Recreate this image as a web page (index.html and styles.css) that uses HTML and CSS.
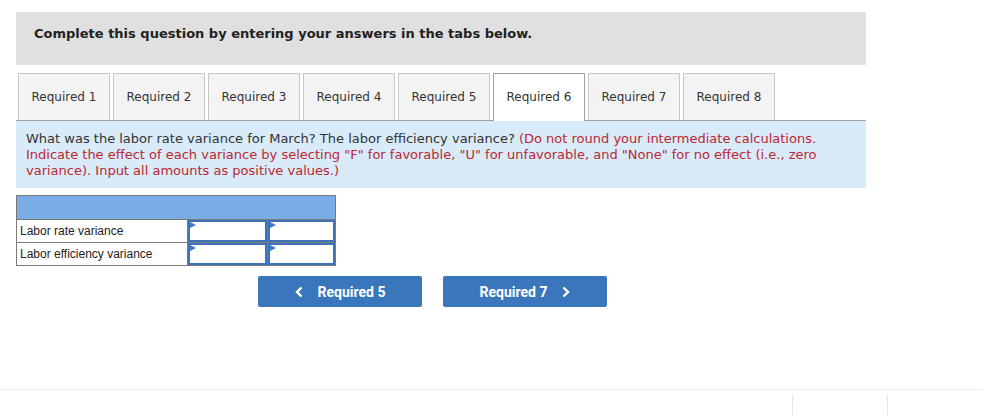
FILE: index.html
```html
<!DOCTYPE html>
<html lang="en">
<head>
    <meta charset="UTF-8">
    <title>Required 6</title>
    <link rel="stylesheet" href="styles.css">
</head>
<body>
    <div class="container">
        <div class="instructions">Complete this question by entering your answers in the tabs below.</div>

        <div class="tabs">
            <div class="tab">Required 1</div>
            <div class="tab">Required 2</div>
            <div class="tab">Required 3</div>
            <div class="tab">Required 4</div>
            <div class="tab">Required 5</div>
            <div class="tab active">Required 6</div>
            <div class="tab">Required 7</div>
            <div class="tab">Required 8</div>
        </div>

        <div class="question">What was the labor rate variance for March? The labor efficiency variance? <span class="note">(Do not round your intermediate calculations. Indicate the effect of each variance by selecting "F" for favorable, "U" for unfavorable, and "None" for no effect (i.e., zero variance). Input all amounts as positive values.)</span></div>

        <table class="answers">
            <tr class="head">
                <td colspan="3"></td>
            </tr>
            <tr>
                <td class="label">Labor rate variance</td>
                <td class="entry col2"><div class="box"></div></td>
                <td class="entry col3"><div class="box"></div></td>
            </tr>
            <tr>
                <td class="label">Labor efficiency variance</td>
                <td class="entry col2"><div class="box"></div></td>
                <td class="entry col3"><div class="box"></div></td>
            </tr>
        </table>

        <div class="nav">
            <button class="nav-btn">
                <svg class="chev left" width="8" height="12" viewBox="0 0 8 12"><path d="M6.5 1.5 L2 6 L6.5 10.5" fill="none" stroke="#fff" stroke-width="2.4"/></svg>
                Required 5
            </button>
            <button class="nav-btn">
                Required 7
                <svg class="chev right" width="8" height="12" viewBox="0 0 8 12"><path d="M1.5 1.5 L6 6 L1.5 10.5" fill="none" stroke="#fff" stroke-width="2.4"/></svg>
            </button>
        </div>
    </div>

    <footer class="footer">
        <div class="cell wide"></div>
        <div class="cell"></div>
        <div class="cell"></div>
    </footer>
</body>
</html>
```

FILE: styles.css
```css
body {
    margin: 0;
    font-family: "DejaVu Sans", Verdana, sans-serif;
    color: #333;
    background: #fff;
}

.container {
    width: 850px;
    padding: 12px 0 0 16px;
}

.instructions {
    background-color: #e0e0e0;
    height: 53px;
    box-sizing: border-box;
    padding: 14px 18px 0;
    font-size: 13px;
    line-height: 16px;
    font-weight: bold;
    color: #222;
}

.tabs {
    display: flex;
    gap: 3px;
    margin-top: 8px;
    padding-left: 2px;
    border-bottom: 1px solid #a0a0a0;
    height: 47px;
}

.tab {
    width: 92px;
    box-sizing: border-box;
    height: 47px;
    border: 1px solid #c8c8c8;
    border-bottom: none;
    background-color: #f3f3f3;
    font-size: 12px;
    line-height: 47px;
    text-align: center;
    color: #333;
}

.tab.active {
    background-color: #fff;
    border-color: #a0a0a0;
    height: 48px;
    position: relative;
    z-index: 1;
}

.question {
    background-color: #d9ebf9;
    padding: 10px 10px 9px;
    font-size: 13px;
    line-height: 16px;
    color: #333;
}

.note {
    color: #bb2731;
}

.answers {
    margin-top: 7px;
    border-collapse: collapse;
    font-family: "Liberation Sans", Arial, sans-serif;
    font-size: 12px;
    color: #222;
}

.answers td {
    border: 1px solid #7a7a7a;
    padding: 0;
}

.answers .head td {
    background-color: #7aade5;
    height: 23px;
}

.label {
    width: 167px;
    padding: 0 0 0 3px !important;
}

.col2 {
    width: 79px;
}

.col3 {
    width: 67px;
}

.box {
    position: relative;
    height: 22px;
    box-sizing: border-box;
    border: 2px solid #3c72b6;
    background: #fff;
}

.box::before {
    content: "";
    position: absolute;
    left: 0;
    top: 0;
    border-left: 6px solid #3c7ccb;
    border-top: 3px solid transparent;
    border-bottom: 3px solid transparent;
}

.nav {
    display: flex;
    gap: 21px;
    padding-left: 242px;
    margin-top: 10px;
}

.nav-btn {
    width: 164px;
    height: 31px;
    border: none;
    border-radius: 2px;
    background-color: #3a76bb;
    color: #fff;
    font-family: Roboto, "Liberation Sans", sans-serif;
    font-weight: bold;
    font-size: 14px;
    cursor: pointer;
    display: flex;
    align-items: center;
    justify-content: center;
    padding: 0;
}

.chev.left {
    margin-right: 15px;
}

.chev.right {
    margin-left: 15px;
}

.footer {
    margin-top: 82px;
    border-top: 1px solid #eeeeee;
    display: flex;
    padding-top: 5px;
    height: 30px;
}

.cell {
    width: 95px;
    border-left: 1px solid #e6e6e6;
}

.cell.wide {
    width: 795px;
    border-left: none;
}
```
